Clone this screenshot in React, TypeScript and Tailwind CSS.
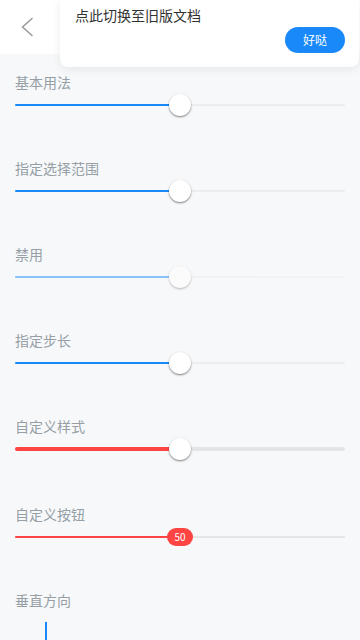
import React from "react";

function Slider({
  active = "#1989fa",
  inactive = "#ebedf0",
  bar = 2,
  disabled = false,
  custom = false,
}: {
  active?: string;
  inactive?: string;
  bar?: number;
  disabled?: boolean;
  custom?: boolean;
}) {
  return (
    <div className={`relative mx-[15px] mt-[4px] flex h-[22px] items-center ${disabled ? "opacity-50" : ""}`}>
      <div className="flex w-full rounded-full" style={{ height: bar, background: inactive }}>
        <div className="h-full w-1/2 rounded-full" style={{ background: active }} />
      </div>
      {custom ? (
        <div className="absolute left-1/2 top-1/2 flex h-[18px] w-[26px] -translate-x-1/2 -translate-y-1/2 items-center justify-center rounded-full bg-[#ff4444] text-[10px] leading-[18px] text-white">
          50
        </div>
      ) : (
        <div className="absolute left-1/2 top-1/2 h-[22px] w-[22px] -translate-x-1/2 -translate-y-1/2 rounded-full bg-white shadow-[0_1px_2px_rgba(0,0,0,0.5)]" />
      )}
    </div>
  );
}

function Block({ title, children, h = 86 }: { title: string; children: React.ReactNode; h?: number }) {
  return (
    <div style={{ height: h }}>
      <h2 className="px-[15px] text-[14px] font-normal leading-[16px] text-[#959fa5]">{title}</h2>
      {children}
    </div>
  );
}

export default function App() {
  return (
    <div
      className="relative h-[640px] w-[360px] overflow-hidden bg-[#f7f8fa]"
      style={{ fontFamily: '"Noto Sans CJK SC", "Noto Sans", sans-serif' }}
    >
      <div className="flex h-[54px] items-center bg-white pl-[18px]">
        <svg width="18" height="22" viewBox="0 0 18 22" fill="none">
          <polyline points="14,2.5 4.5,11 14,19.5" stroke="#999" strokeWidth="1.6" strokeLinecap="round" strokeLinejoin="round" />
        </svg>
      </div>
      <div className="pt-[20px]">
        <Block title="基本用法">
          <Slider />
        </Block>
        <Block title="指定选择范围">
          <Slider />
        </Block>
        <Block title="禁用">
          <Slider disabled />
        </Block>
        <Block title="指定步长">
          <Slider />
        </Block>
        <Block title="自定义样式" h={88}>
          <Slider active="#ff4444" inactive="#e5e5e5" bar={4} />
        </Block>
        <Block title="自定义按钮">
          <Slider active="#ff4444" inactive="#e5e5e5" custom />
        </Block>
        <Block title="垂直方向" h={160}>
          <div className="relative ml-[45px] mt-[14px] h-[108px] w-[2px] bg-[#ebedf0]">
            <div className="h-1/2 w-full bg-[#1989fa]" />
            <div className="absolute left-1/2 top-1/2 h-[22px] w-[22px] -translate-x-1/2 -translate-y-1/2 rounded-full bg-white shadow-[0_1px_2px_rgba(0,0,0,0.5)]" />
          </div>
        </Block>
      </div>

      <div className="absolute left-[60px] right-[1px] top-0 h-[67px] rounded-b-[8px] bg-white shadow-[0_2px_10px_rgba(0,0,0,0.08)]">
        <div className="pl-[15px] pt-[5px] text-[14px] leading-[20px] text-[#323233]">点此切换至旧版文档</div>
        <div className="absolute right-[14px] top-[27px] flex h-[26px] w-[60px] items-center justify-center rounded-full bg-[#1989fa] text-[12px] text-white">
          好哒
        </div>
      </div>
    </div>
  );
}
